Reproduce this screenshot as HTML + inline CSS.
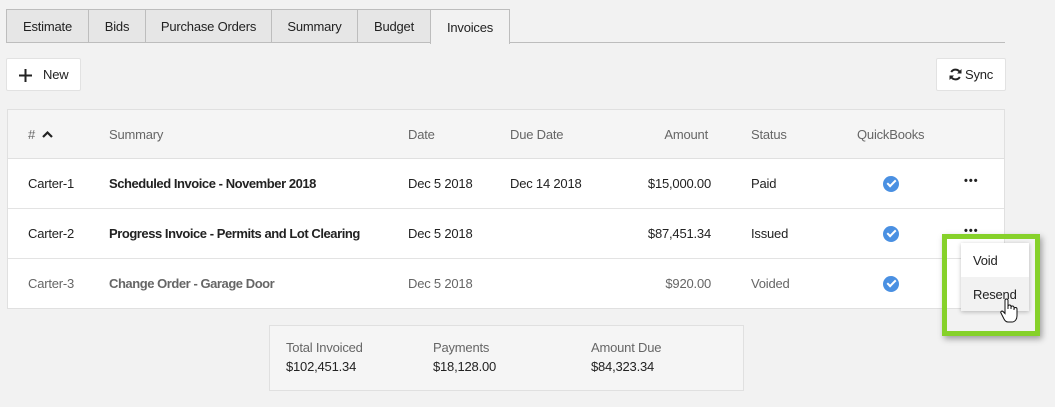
<!DOCTYPE html>
<html><head><style>
*{box-sizing:border-box;margin:0;padding:0}
body{width:1055px;height:407px;background:#f2f2f2;font-family:"Liberation Sans",Arial,sans-serif;font-size:13px;color:#222;position:relative;overflow:hidden;letter-spacing:-0.2px}
.a{position:absolute}
b,.bd{letter-spacing:-0.45px}
.tab{position:absolute;top:9px;height:34px;background:#e6e6e6;border:1px solid #bdbdbd;border-bottom:none;text-align:center;line-height:33px;color:#222}
.tabline{position:absolute;left:6px;top:42px;width:999px;height:1px;background:#bdbdbd}
.btn{position:absolute;background:#fff;border:1px solid #e2e2e2;border-radius:2px;height:33px;line-height:31px}
.tbl{position:absolute;left:7px;top:109px;width:998px;height:200px;background:#fff;border:1px solid #e0e0e0}
.hdr{position:absolute;left:0;top:0;width:100%;height:49px;background:#f5f5f5;border-bottom:1px solid #e0e0e0;color:#666}
.row{position:absolute;left:0;width:100%;height:50px;border-bottom:1px solid #e3e3e3}
.c{position:absolute;top:0;line-height:50px;white-space:nowrap}
.r{text-align:right}
.chk{position:absolute;width:16px;height:16px;border-radius:50%;background:#4a90e2;top:17px;left:875px}
.chk:after{content:"";position:absolute;left:4px;top:4px;width:7px;height:3px;border-left:2px solid #fff;border-bottom:2px solid #fff;transform:rotate(-45deg)}
.dots{position:absolute;left:956px;top:16px;font-weight:bold;letter-spacing:1px;font-size:11px}
.g{color:#666}
</style></head><body>
<div class="tab" style="left:6px;width:83px">Estimate</div>
<div class="tab" style="left:88px;width:58px">Bids</div>
<div class="tab" style="left:145px;width:127px">Purchase Orders</div>
<div class="tab" style="left:271px;width:87px">Summary</div>
<div class="tab" style="left:357px;width:74px">Budget</div>
<div class="tabline"></div>
<div class="tab" style="left:430px;width:80px;height:35px;background:#f2f2f2;line-height:36px">Invoices</div>

<div class="btn" style="left:6px;top:58px;width:75px">
 <svg class="a" style="left:12px;top:10px" width="13" height="13"><path d="M6.5 0V13M0 6.5H13" stroke="#222" stroke-width="2"/></svg>
 <span class="a" style="left:36px">New</span></div>
<div class="btn" style="left:936px;top:58px;width:70px">
 <svg class="a" style="left:12px;top:9px" width="13" height="13" viewBox="0 0 13 13"><path d="M11 4.5A5 5 0 0 0 2.2 4M2 8.5A5 5 0 0 0 10.8 9" fill="none" stroke="#222" stroke-width="2"/><path d="M12.5 1V5.5H8z M0.5 12V7.5H5z" fill="#222"/></svg>
 <span class="a" style="left:28px">Sync</span></div>

<div class="tbl">
 <div class="hdr">
  <div class="c" style="left:20px;line-height:49px">#</div>
  <svg class="a" style="left:34px;top:20px" width="11" height="8"><path d="M1 7L5.5 2.5L10 7" fill="none" stroke="#222" stroke-width="2.2"/></svg>
  <div class="c" style="left:101px;line-height:49px">Summary</div>
  <div class="c" style="left:400px;line-height:49px">Date</div>
  <div class="c" style="left:502px;line-height:49px">Due Date</div>
  <div class="c r" style="left:600px;width:100px;line-height:49px">Amount</div>
  <div class="c" style="left:743px;line-height:49px">Status</div>
  <div class="c" style="left:849px;line-height:49px">QuickBooks</div>
 </div>
 <div class="row" style="top:49px">
  <div class="c" style="left:20px">Carter-1</div>
  <div class="c bd" style="left:101px;font-weight:bold">Scheduled Invoice - November 2018</div>
  <div class="c" style="left:400px">Dec 5 2018</div>
  <div class="c" style="left:502px">Dec 14 2018</div>
  <div class="c r" style="left:600px;width:103px">$15,000.00</div>
  <div class="c" style="left:743px">Paid</div>
  <div class="chk"></div><div class="dots">•••</div>
 </div>
 <div class="row" style="top:99px">
  <div class="c" style="left:20px">Carter-2</div>
  <div class="c bd" style="left:101px;font-weight:bold">Progress Invoice - Permits and Lot Clearing</div>
  <div class="c" style="left:400px">Dec 5 2018</div>
  <div class="c r" style="left:600px;width:103px">$87,451.34</div>
  <div class="c" style="left:743px">Issued</div>
  <div class="chk"></div><div class="dots">•••</div>
 </div>
 <div class="row g" style="top:149px;border-bottom:none">
  <div class="c" style="left:20px">Carter-3</div>
  <div class="c bd" style="left:101px;font-weight:bold">Change Order - Garage Door</div>
  <div class="c" style="left:400px">Dec 5 2018</div>
  <div class="c r" style="left:600px;width:103px">$920.00</div>
  <div class="c" style="left:743px">Voided</div>
  <div class="chk"></div>
 </div>
</div>

<div class="a" style="left:269px;top:325px;width:475px;height:66px;background:#f5f5f5;border:1px solid #e0e0e0">
 <div class="a g" style="left:16px;top:14px">Total Invoiced</div><div class="a" style="left:16px;top:33px">$102,451.34</div>
 <div class="a g" style="left:163px;top:14px">Payments</div><div class="a" style="left:163px;top:33px">$18,128.00</div>
 <div class="a g" style="left:321px;top:14px">Amount Due</div><div class="a" style="left:321px;top:33px">$84,323.34</div>
</div>

<div class="a" style="left:942px;top:234px;width:98px;height:102px;border:5px solid #86d12a;box-shadow:2px 3px 6px rgba(0,0,0,.35)"></div>
<div class="a" style="left:961px;top:243px;width:68px;height:68px;background:#fff;box-shadow:0 1px 4px rgba(0,0,0,.25)">
 <div class="a" style="left:12px;top:10px">Void</div>
 <div class="a" style="left:0;top:34px;width:68px;height:34px;background:#f2f2f2"><span class="a" style="left:12px;top:10px">Resend</span></div>
</div>
<svg class="a" style="left:1000px;top:298px" width="18" height="26" viewBox="0 0 18 26"><path d="M5 2.5a1.5 1.5 0 0 1 3 0V11V8.5a1.5 1.5 0 0 1 3 0V11V9.5a1.5 1.5 0 0 1 3 0V12V11a1.5 1.5 0 0 1 3 0V18c0 3-2 6-5 6H8c-2 0-3-1-4-3L1 15c-.8-1.3.8-2.6 2-1.5L5 15.5z" fill="#fff" stroke="#111" stroke-width="1"/></svg>
</body></html>
